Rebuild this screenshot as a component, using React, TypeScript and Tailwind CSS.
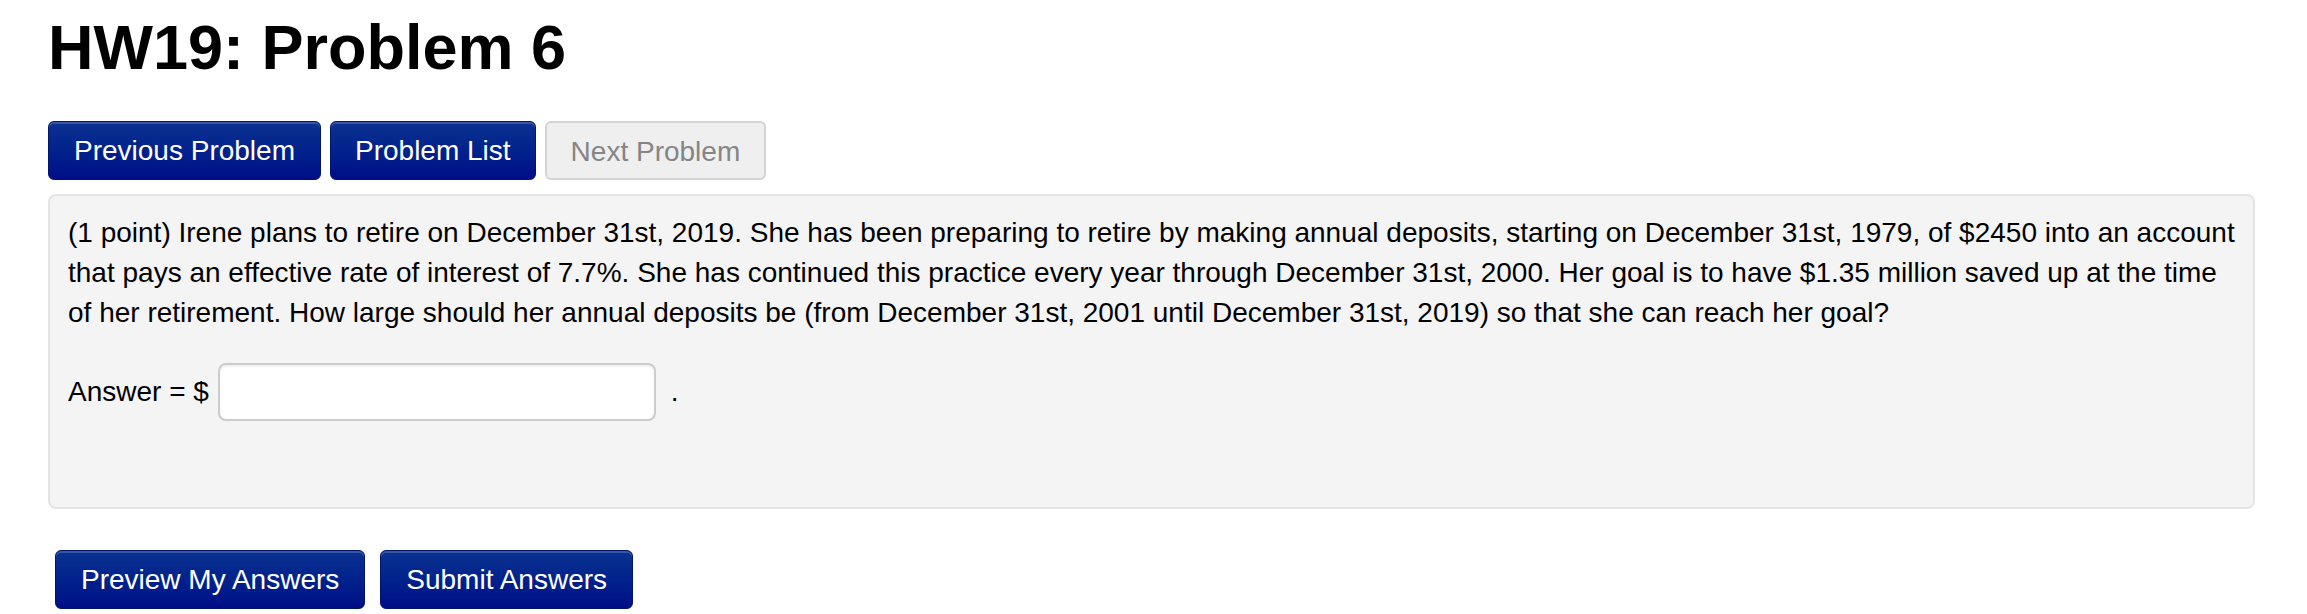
import React from "react";

const navBtn =
  "h-[59px] rounded-[6px] border text-[28px] leading-[57px] whitespace-nowrap";
const primary =
  "border-[#00166b] bg-linear-to-b from-[#0b3190] to-[#000c88] text-white shadow-[inset_0_2px_0_rgba(255,255,255,0.18)]";

export default function App() {
  return (
    <div
      className="min-h-screen bg-white pl-[48px] pr-[52px] pt-[11px] text-black"
      style={{ fontFamily: '"Liberation Sans", Arial, sans-serif' }}
    >
      <h1 className="text-[63px] font-bold leading-[72px]">HW19: Problem 6</h1>

      <div className="mt-[38px] flex gap-[9px]">
        <button className={`${navBtn} ${primary} px-[25px]`}>Previous Problem</button>
        <button className={`${navBtn} ${primary} px-[24px]`}>Problem List</button>
        <button
          className={`${navBtn} border-2 border-[#d4d4d4] bg-[#efefef] px-[24px] text-[#858585]`}
          disabled
        >
          Next Problem
        </button>
      </div>

      <div className="mt-[14px] rounded-[8px] border-2 border-[#e4e4e4] bg-[#f4f4f4] px-[18px] pt-[17px] pb-[86px]">
        <p className="text-[28px] leading-[40px]">
          (1 point) Irene plans to retire on December 31st, 2019. She has been
          preparing to retire by making annual deposits, starting on December
          31st, 1979, of $2450 into an account that pays an effective rate of
          interest of 7.7%. She has continued this practice every year through
          December 31st, 2000. Her goal is to have $1.35 million saved up at
          the time of her retirement. How large should her annual deposits be
          (from December 31st, 2001 until December 31st, 2019) so that she can
          reach her goal?
        </p>
        <div className="mt-[30px] flex items-center text-[28px] leading-[40px]">
          <span>Answer = $</span>
          <input
            type="text"
            className="ml-[9px] h-[58px] w-[438px] rounded-[8px] border-2 border-[#cccccc] bg-white shadow-[inset_0_2px_2px_rgba(0,0,0,0.06)] outline-none"
          />
          <span className="ml-[15px]">.</span>
        </div>
      </div>

      <div className="mt-[41px] flex gap-[15px] pl-[7px]">
        <button className={`${navBtn} ${primary} px-[25px]`}>Preview My Answers</button>
        <button className={`${navBtn} ${primary} px-[25px]`}>Submit Answers</button>
      </div>
    </div>
  );
}
